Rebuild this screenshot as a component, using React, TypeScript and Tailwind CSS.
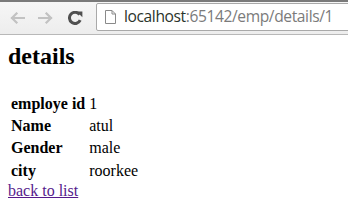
import React from "react";

function Arrow({ dir }: { dir: "left" | "right" }) {
  return (
    <svg width="16" height="12" viewBox="0 0 16 12" className={dir === "right" ? "rotate-180" : ""}>
      <path d="M15 6H3M7.5 1.5L3 6l4.5 4.5" fill="none" stroke="#c2c2c2" strokeWidth="2.2" strokeLinecap="square" />
    </svg>
  );
}

export default function App() {
  return (
    <div className="w-[348px] h-[201px] overflow-hidden bg-white leading-normal" style={{ fontFamily: '"Liberation Serif", serif' }}>
      <div className="h-[35px] bg-gradient-to-b from-[#f6f6f6] to-[#ededed] border-t-2 border-t-[#7a7a7a] border-b border-b-[#b8b8b8] flex items-center">
        <div className="w-[9px]" />
        <Arrow dir="left" />
        <div className="w-[13px]" />
        <Arrow dir="right" />
        <div className="w-[14px]" />
        <svg width="15" height="14" viewBox="0 0 15 14">
          <path d="M12.2 9.2A5.6 5.6 0 1 1 11.6 3.6" fill="none" stroke="#505050" strokeWidth="3" />
          <path d="M8.6 0.4L14.4 0.4L14.4 6.2Z" fill="#505050" />
        </svg>
        <div className="w-[13px]" />
        <div className="flex-1 h-[28px] -mt-[3px] bg-white border border-[#a9a9a9] rounded-[2px] flex items-center -mr-[4px]">
          <div className="w-[8px]" />
          <svg width="11" height="14" viewBox="0 0 11 14">
            <path d="M0.5 0.5H7L10.5 4V13.5H0.5Z M7 0.5V4H10.5" fill="#fff" stroke="#8a8a8a" strokeWidth="1" />
          </svg>
          <div className="w-[8px]" />
          <span className="text-[15.6px] leading-none whitespace-nowrap tracking-[-0.4px]" style={{ fontFamily: '"Open Sans", sans-serif' }}>
            <span className="text-[#2a332a]">localhost</span>
            <span className="text-[#7b7b7b]">:65142/emp/details/1</span>
          </span>
        </div>
      </div>
      <div className="px-[8px]">
        <h2 className="text-[24px] font-bold mt-[8px] mb-[21px] leading-[27.6px] text-black">details</h2>
        <table className="border-separate border-spacing-[2px] text-[16px] leading-[18.4px] text-black">
          <tbody>
            <tr>
              <th className="text-left font-bold p-[1px]">employe id</th>
              <td className="p-[1px]">1</td>
            </tr>
            <tr>
              <th className="text-left font-bold p-[1px]">Name</th>
              <td className="p-[1px]">atul</td>
            </tr>
            <tr>
              <th className="text-left font-bold p-[1px]">Gender</th>
              <td className="p-[1px]">male</td>
            </tr>
            <tr>
              <th className="text-left font-bold p-[1px]">city</th>
              <td className="p-[1px]">roorkee</td>
            </tr>
          </tbody>
        </table>
        <a href="#" className="text-[16px] text-[#551a8b] underline block leading-[18px] -mt-[1px]">back to list</a>
      </div>
    </div>
  );
}
